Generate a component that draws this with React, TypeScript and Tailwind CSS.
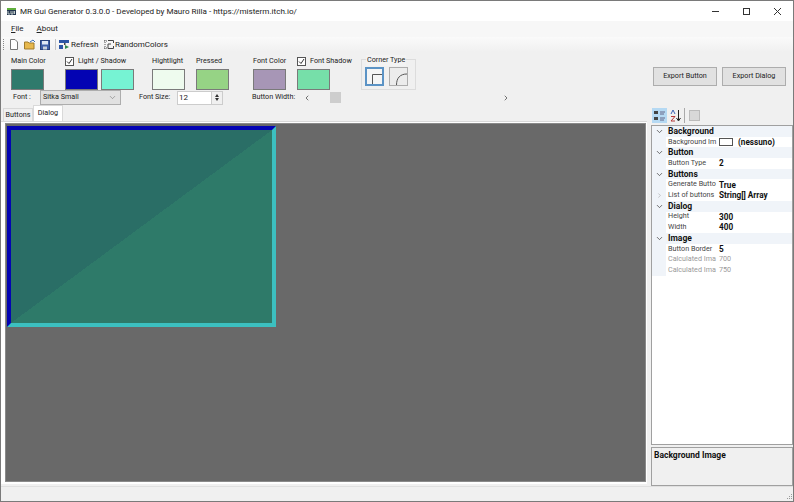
import { ChevronDown, ChevronRight } from "lucide-react";

const font = "font-['Roboto',sans-serif]";

function Swatch({ color }: { color: string }) {
  return (
    <div
      className="h-[21px] w-[33px] border border-[#7a7a7a]"
      style={{ backgroundColor: color }}
    />
  );
}

function Check() {
  return (
    <div className="flex h-[9px] w-[9px] items-center justify-center border border-[#555] bg-white">
      <svg width="7" height="7" viewBox="0 0 7 7">
        <path d="M1 3.5 L3 5.5 L6 1" fill="none" stroke="#333" strokeWidth="1" />
      </svg>
    </div>
  );
}

function Toolbar() {
  return (
    <div className="flex h-[15px] items-center pl-[2px] text-[8px] text-[#222]">
      <div className="mr-[6px] h-[11px] w-px border-l border-dotted border-[#888]" />
      <svg width="8" height="11" viewBox="0 0 8 11" className="mr-[6px]">
        <path d="M.5 .5 H5 L7.5 3 V10.5 H.5 Z" fill="#fff" stroke="#777" />
      </svg>
      <svg width="12" height="11" viewBox="0 0 12 11" className="mr-[4px]">
        <path d="M.5 3 H4 L5 4 H10 V10 H.5 Z" fill="#e7b84d" stroke="#a17c2d" />
        <path d="M6 3 L9 1 L11 3" fill="none" stroke="#3b6fb5" />
      </svg>
      <svg width="10" height="10" viewBox="0 0 10 10" className="mr-[5px]">
        <rect x=".5" y=".5" width="9" height="9" fill="#3f5fa8" stroke="#27407a" />
        <rect x="2" y="1" width="6" height="3.5" fill="#dfe7f5" />
        <rect x="3" y="6.5" width="4" height="3" fill="#c8d0de" />
      </svg>
      <div className="mr-[3px] h-[11px] w-px bg-[#c4c4c4]" />
      <svg width="11" height="11" viewBox="0 0 11 11" className="mr-[1px]">
        <rect x="0" y="1" width="10" height="3" fill="#2c56a5" />
        <rect x="5" y="4" width="1.5" height="2" fill="#444" />
        <rect x="0" y="6" width="4" height="4" fill="#2c56a5" />
        <path d="M6 6 L10 8 L6 10 Z" fill="#2f8a4e" />
      </svg>
      <span className="mr-[5px] w-[27px]">Refresh</span>
      <svg width="11" height="11" viewBox="0 0 11 11" className="mr-[1px]">
        <path d="M2 1 V10 M4 2 H0 M4 9 H0" fill="none" stroke="#555" strokeDasharray="1 1" />
        <path d="M5 1.5 H10.5 V4 M10.5 7 V9.5 H5 V5 H8" fill="none" stroke="#444" />
      </svg>
      <span>RandomColors</span>
    </div>
  );
}

function ColorLabel({ children }: { children: React.ReactNode }) {
  return <div className="flex h-[17px] items-center gap-[4px] whitespace-nowrap pt-[2px]">{children}</div>;
}

function ColorRow() {
  return (
    <div className="relative flex h-[38px] pl-[10px] text-[7.2px] text-[#222]">
      <div className="flex w-[54px] flex-col">
        <ColorLabel>Main Color</ColorLabel>
        <Swatch color="#2f7a6c" />
      </div>
      <div className="flex w-[87px] flex-col">
        <ColorLabel>
          <Check />
          Light / Shadow
        </ColorLabel>
        <div className="flex gap-[3px]">
          <Swatch color="#0303b3" />
          <Swatch color="#76f3d3" />
        </div>
      </div>
      <div className="flex w-[44px] flex-col">
        <ColorLabel>Hightlight</ColorLabel>
        <Swatch color="#eefbee" />
      </div>
      <div className="flex w-[57px] flex-col">
        <ColorLabel>Pressed</ColorLabel>
        <Swatch color="#96d385" />
      </div>
      <div className="flex w-[44px] flex-col">
        <ColorLabel>Font Color</ColorLabel>
        <Swatch color="#a796b6" />
      </div>
      <div className="flex w-[64px] flex-col">
        <ColorLabel>
          <Check />
          Font Shadow
        </ColorLabel>
        <Swatch color="#76dfa9" />
      </div>
      <div className="relative mt-[7px] flex h-[31px] w-[55px] gap-[5px] border border-[#dcdcdc] pl-[3px] pt-[7px]">
        <span className="absolute -top-[5px] left-[4px] whitespace-nowrap bg-[#f3f3f3] px-px">Corner Type</span>
        <div className="flex h-[19px] w-[19px] items-end justify-end border-2 border-[#5b93c5] bg-[#f5f5f5]">
          <svg width="10" height="10" viewBox="0 0 10 10">
            <path d="M.5 10 V.5 H10" fill="none" stroke="#555" />
          </svg>
        </div>
        <div className="flex h-[19px] w-[19px] items-end justify-end border border-[#adadad] bg-[#ececec]">
          <svg width="11" height="12" viewBox="0 0 11 12">
            <path d="M.5 12 C.5 5 4 1 11 1" fill="none" stroke="#555" />
          </svg>
        </div>
      </div>
      <div className="ml-auto mr-[7px] mt-[15px] flex gap-[5px]">
        <button className="h-[19px] w-[64px] border border-[#adadad] bg-[#e1e1e1] text-[7.2px]">Export Button</button>
        <button className="h-[19px] w-[64px] border border-[#adadad] bg-[#e1e1e1] text-[7.2px]">Export Dialog</button>
      </div>
    </div>
  );
}

function FontRow() {
  return (
    <div className="flex h-[15px] items-center text-[7.2px] text-[#222]">
      <span className="ml-[12px] w-[27px]">Font :</span>
      <div className="flex h-[15px] w-[81px] items-center justify-between border border-[#adadad] bg-[#e1e1e1] pl-[2px] pr-[3px]">
        Sitka Small
        <ChevronDown size={9} strokeWidth={1.2} color="#555" />
      </div>
      <span className="ml-[18px] w-[38px]">Font Size:</span>
      <div className="flex h-[14px] w-[46px] items-center justify-between border border-[#ccc] bg-white pl-[1px] text-[8px]">
        12
        <div className="flex h-full w-[11px] flex-col items-center justify-center gap-px border-l border-[#ccc] bg-[#f0f0f0]">
          <div className="h-0 w-0 border-x-[2.5px] border-b-[3px] border-x-transparent border-b-[#333]" />
          <div className="h-0 w-0 border-x-[2.5px] border-t-[3px] border-x-transparent border-t-[#333]" />
        </div>
      </div>
      <span className="ml-[29px] w-[51px]">Button Width:</span>
      <div className="flex h-[13px] w-[207px] items-center bg-[#f0f0f0]">
        <ChevronRight size={8} strokeWidth={2} color="#333" className="rotate-180" />
        <div className="ml-[19px] h-[11px] w-[11px] bg-[#cdcdcd]" />
        <ChevronRight size={8} strokeWidth={2} color="#333" className="ml-auto" />
      </div>
    </div>
  );
}

function Tabs() {
  return (
    <div className="flex h-[16px] items-end pl-[2px] text-[7.2px] text-[#222]">
      <div className="flex h-[13px] w-[30px] items-center justify-center border border-b-0 border-[#d9d9d9] bg-[#f0f0f0]">Buttons</div>
      <div className="flex h-[16px] w-[30px] items-center justify-center border border-b-0 border-[#d9d9d9] bg-white">Dialog</div>
    </div>
  );
}

function DialogPreview() {
  return (
    <div className="h-[201px] w-[269px] border-4 border-b-[#3cc0c0] border-l-[#0303b3] border-r-[#3cc0c0] border-t-[#0303b3] bg-[linear-gradient(to_bottom_right,#2a6e66_50%,#2e7a69_50%)]" />
  );
}

type Row = { label: string; value?: string; head?: boolean; dim?: boolean; swatch?: boolean; more?: boolean };

const rows: Row[] = [
  { label: "Background", head: true },
  { label: "Background Im", value: "(nessuno)", swatch: true },
  { label: "Button", head: true },
  { label: "Button Type", value: "2" },
  { label: "Buttons", head: true },
  { label: "Generate Butto", value: "True" },
  { label: "List of buttons", value: "String[] Array", more: true },
  { label: "Dialog", head: true },
  { label: "Height", value: "300" },
  { label: "Width", value: "400" },
  { label: "Image", head: true },
  { label: "Button Border", value: "5" },
  { label: "Calculated Ima", value: "700", dim: true },
  { label: "Calculated Ima", value: "750", dim: true },
];

function PropertyRow({ row }: { row: Row }) {
  if (row.head) {
    return (
      <div className="flex h-[10.7px] items-center bg-[#f0f4f9] text-[8.5px] font-bold text-[#111]">
        <div className="flex w-[16px] shrink-0 justify-center pr-[2px]">
          <ChevronDown size={9} strokeWidth={2} color="#444" />
        </div>
        {row.label}
      </div>
    );
  }
  return (
    <div className={`flex h-[10.7px] items-center text-[7.2px] ${row.dim ? "text-[#999]" : "text-[#444]"}`}>
      <div className="flex h-full w-[14px] shrink-0 items-center justify-center bg-[#f0f4f9]">
        {row.more && <ChevronRight size={7} strokeWidth={1.5} color="#888" />}
      </div>
      <div className="flex h-full w-[51px] shrink-0 items-center overflow-hidden whitespace-nowrap pl-[2px]">{row.label}</div>
      <div className={`flex h-full items-center gap-[5px] pl-[2px] ${row.dim ? "" : "text-[8.2px] font-bold text-[#111]"}`}>
        {row.swatch && <div className="h-[8px] w-[14px] border border-[#555] bg-white" />}
        {row.value}
      </div>
    </div>
  );
}

function PropertyPanel() {
  return (
    <div className="ml-[4px] flex w-[142px] flex-col">
      <div className="flex h-[20px] items-start pt-[3px] text-[8px]">
        <div className="ml-[1px] flex h-[15px] w-[15px] items-center justify-center bg-[#b5d9f3]">
          <svg width="11" height="11" viewBox="0 0 11 11">
            <rect x="0" y="1" width="4" height="3" fill="#444" />
            <rect x="0" y="7" width="4" height="3" fill="#444" />
            <path d="M6 2 H11 M6 4 H10 M6 8 H11 M6 10 H10" stroke="#668" />
          </svg>
        </div>
        <svg width="11" height="13" viewBox="0 0 11 13" className="ml-[3px] mt-px">
          <path d="M1 5 L3 1 L5 5" fill="none" stroke="#3a62b5" />
          <path d="M1 7.5 H5 L1 12 H5" fill="none" stroke="#b53a3a" />
          <path d="M8.5 1 V11 M6.5 9 L8.5 12 L10.5 9" fill="none" stroke="#222" />
        </svg>
        <div className="ml-[3px] h-[15px] w-px bg-[#aaa]" />
        <div className="ml-[4px] mt-[2px] h-[11px] w-[11px] border border-[#bbb] bg-[#d8d8d8]" />
      </div>
      <div className="h-[320px] border border-[#a0a0a0] bg-white">
        {rows.map((row, i) => (
          <PropertyRow key={i} row={row} />
        ))}
      </div>
      <div className="mt-[2px] h-[39px] border border-[#a0a0a0] bg-[#f0f0f0] px-[2px] pt-[1px] text-[8.5px] font-bold text-[#111]">
        Background Image
      </div>
    </div>
  );
}

export default function App() {
  return (
    <div className={`flex h-[502px] w-[794px] flex-col overflow-hidden border border-[#7a7a7a] bg-[#f0f0f0] ${font}`}>
      <div className="flex h-[20px] shrink-0 items-center bg-white">
        <svg width="9" height="7" viewBox="0 0 9 7" className="ml-[6px]">
          <rect width="9" height="7" fill="#23364f" />
          <rect width="9" height="2" fill="#5fae3c" />
          <path d="M1 3 V6 H3 M4 3 V6 H6 V3 M7.5 3 V6" fill="none" stroke="#e8f0e8" strokeWidth=".8" />
        </svg>
        <span className="ml-[4px] whitespace-nowrap text-[8.1px] text-[#222]">
          MR Gui Generator 0.3.0.0 - Developed by Mauro Rilla - https://misterm.itch.io/
        </span>
        <div className="ml-auto flex items-center">
          <div className="mr-[24px] h-px w-[7px] bg-[#333]" />
          <div className="mr-[23px] h-[7px] w-[7px] border border-[#333]" />
          <svg width="9" height="9" viewBox="0 0 9 9" className="mr-[11px]">
            <path d="M1 1 L8 8 M8 1 L1 8" stroke="#333" />
          </svg>
        </div>
      </div>
      <div className="flex h-[16px] shrink-0 items-center gap-[13px] bg-[#f7f7f7] pl-[10px] text-[8px] text-[#222]">
        <span><u>F</u>ile</span>
        <span><u>A</u>bout</span>
      </div>
      <div className="bg-[linear-gradient(to_bottom,#fafafa,#f0f0f0)]">
        <Toolbar />
      </div>
      <ColorRow />
      <FontRow />
      <div className="flex min-h-0 flex-1">
        <div className="flex w-[646px] flex-col">
          <Tabs />
          <div className="h-[363px] border-t border-[#d9d9d9] bg-white pb-[2px] pl-[4px] pr-px pt-px">
            <div className="h-full border border-[#8a8a8a] bg-[#696969] pl-px pt-[2px]">
              <DialogPreview />
            </div>
          </div>
        </div>
        <PropertyPanel />
      </div>
      <div className="flex h-[15px] shrink-0 items-end justify-end border-t border-[#e0e0e0] bg-[#f0f0f0]">
        <svg width="8" height="8" viewBox="0 0 8 8">
          <path d="M6 1 h1 v1 h-1 Z M4 3 h1 v1 h-1 Z M6 3 h1 v1 h-1 Z M2 5 h1 v1 h-1 Z M4 5 h1 v1 h-1 Z M6 5 h1 v1 h-1 Z" fill="#9a9a9a" />
        </svg>
      </div>
    </div>
  );
}
